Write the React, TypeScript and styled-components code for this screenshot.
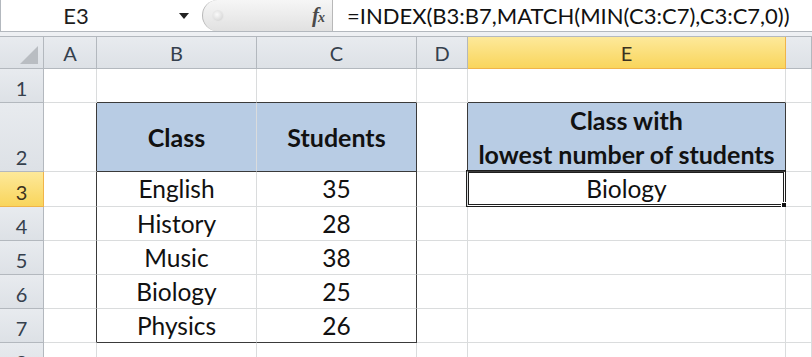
import React from "react";
import styled, { createGlobalStyle } from "styled-components";

const GlobalStyle = createGlobalStyle`
  html, body {
    margin: 0;
    padding: 0;
    background: #fff;
    overflow: hidden;
  }
  body {
    font-family: Lato, "Liberation Sans", sans-serif;
  }
`;

const GRID = "#dadcdd";
const DARK = "#3a3a3a";
const HEAD_LINE = "#b3b8be";

const Window = styled.div`
  width: 812px;
  height: 357px;
  display: flex;
  flex-direction: column;
  overflow: hidden;
  background: #fff;

  & > * {
    flex-shrink: 0;
  }
`;

const FormulaBar = styled.div`
  height: 31px;
  display: flex;
  align-items: stretch;
  border-left: 1px solid ${HEAD_LINE};
  border-bottom: 1px solid ${HEAD_LINE};
  background: #fff;
`;

const NameBox = styled.div`
  width: 201px;
  display: flex;
  align-items: center;
`;

const NameText = styled.span`
  width: 150px;
  text-align: center;
  font-size: 22px;
  color: #1e1e1e;
`;

const DropArrow = styled.span`
  margin-left: 28px;
  width: 0;
  height: 0;
  border-left: 5px solid transparent;
  border-right: 5px solid transparent;
  border-top: 6px solid #222;
`;

const Pill = styled.div`
  width: 131px;
  box-sizing: border-box;
  display: flex;
  align-items: center;
  justify-content: space-between;
  padding: 0 8px 0 10px;
  border: 1px solid #b8b8b8;
  border-top: none;
  border-bottom: none;
  border-radius: 16px 0 0 16px;
  background: linear-gradient(#f6f6f6, #e1e1e1);
`;

const Knob = styled.span`
  width: 10px;
  height: 10px;
  border-radius: 50%;
  background: radial-gradient(circle at 40% 35%, #fafafa, #cdcdcd);
  box-shadow: 0 0 0 1px #e6e6e6;
`;

const Fx = styled.span`
  font-family: "Liberation Serif", serif;
  font-style: italic;
  font-weight: 700;
  font-size: 21px;
  color: #4a4a4a;
  letter-spacing: -1px;

  small {
    font-size: 14px;
  }
`;

const FormulaText = styled.div`
  flex: 1;
  display: flex;
  align-items: center;
  padding-left: 14px;
  font-size: 22px;
  color: #111;
  white-space: nowrap;
`;

const Band = styled.div`
  height: 4px;
  background: #eef0f3;
  border-bottom: 1px solid ${HEAD_LINE};
`;

const Sheet = styled.div`
  display: grid;
  grid-template-columns: 44px 53px 160px 160px 51px 318px 1fr;
  grid-template-rows: 32px 34px 69px 35px 34px 34px 34px 34px 34px;
`;

const Head = styled.div<{ $active?: boolean; $row?: boolean }>`
  box-sizing: border-box;
  display: flex;
  justify-content: center;
  align-items: ${(p) => (p.$row ? "flex-end" : "center")};
  padding-bottom: ${(p) => (p.$row ? "3px" : "0")};
  font-size: 20px;
  line-height: 22px;
  color: ${(p) => (p.$active ? "#3c3220" : "#35404d")};
  background: ${(p) =>
    p.$active
      ? "linear-gradient(#fde99a, #f9d55c)"
      : "linear-gradient(#e8ebef, #dde1e6)"};
  border-right: 1px solid ${(p) => (p.$active ? "#f0b449" : HEAD_LINE)};
  border-bottom: 1px solid ${(p) => (p.$active ? "#f0b449" : HEAD_LINE)};
`;

const Corner = styled(Head)`
  align-items: flex-end;
  justify-content: flex-end;
  padding: 0 5px 4px 0;
`;

const Cell = styled.div<{
  $fill?: string;
  $bold?: boolean;
  $darkRight?: boolean;
  $darkBottom?: boolean;
}>`
  position: relative;
  box-sizing: border-box;
  display: flex;
  align-items: center;
  justify-content: center;
  text-align: center;
  white-space: nowrap;
  font-size: ${(p) => (p.$bold ? "25px" : "24.5px")};
  line-height: 34px;
  font-weight: ${(p) => (p.$bold ? 700 : 400)};
  color: #111;
  background: ${(p) => p.$fill ?? "#fff"};
  border-right: 1px solid ${(p) => (p.$darkRight ? DARK : GRID)};
  border-bottom: 1px solid ${(p) => (p.$darkBottom ? DARK : GRID)};
`;

const Selection = styled.div`
  position: absolute;
  top: -2px;
  left: -2px;
  right: -1px;
  bottom: -1px;
  border: 3px double #1e1e1e;
  pointer-events: none;
`;

const FillHandle = styled.span`
  position: absolute;
  right: -5px;
  bottom: -5px;
  width: 5px;
  height: 5px;
  background: #111;
  border: 1px solid #fff;
`;

const HEADER_FILL = "#b8cce4";
const columns = ["A", "B", "C", "D", "E", "F"];

type Spec = { text?: React.ReactNode; bold?: boolean; fill?: string };

const content: Record<string, Spec> = {
  B2: { text: "Class", bold: true, fill: HEADER_FILL },
  C2: { text: "Students", bold: true, fill: HEADER_FILL },
  E2: {
    text: (
      <span>
        Class with
        <br />
        lowest number of students
      </span>
    ),
    bold: true,
    fill: HEADER_FILL,
  },
  B3: { text: "English" },
  C3: { text: "35" },
  B4: { text: "History" },
  C4: { text: "28" },
  B5: { text: "Music" },
  C5: { text: "38" },
  B6: { text: "Biology" },
  C6: { text: "25" },
  B7: { text: "Physics" },
  C7: { text: "26" },
  E3: { text: "Biology" },
};

const inTable = (row: number) => row >= 2 && row <= 7;

const darkRight = (col: string, row: number) =>
  ((col === "A" || col === "C") && inTable(row)) ||
  ((col === "D" || col === "E") && row === 2);

const darkBottom = (col: string, row: number) =>
  ((col === "B" || col === "C") && (row === 1 || row === 2 || row === 7)) ||
  (col === "E" && (row === 1 || row === 2));

const activeCol = "E";
const activeRow = 3;

export default function App() {
  const rows = [1, 2, 3, 4, 5, 6, 7, 8];
  return (
    <Window>
      <GlobalStyle />
      <FormulaBar>
        <NameBox>
          <NameText>E3</NameText>
          <DropArrow />
        </NameBox>
        <Pill>
          <Knob />
          <Fx>
            f<small>x</small>
          </Fx>
        </Pill>
        <FormulaText>=INDEX(B3:B7,MATCH(MIN(C3:C7),C3:C7,0))</FormulaText>
      </FormulaBar>
      <Band />
      <Sheet>
        <Corner>
          <svg width="18" height="18" viewBox="0 0 18 18">
            <polygon points="18,0 18,18 0,18" fill="#b9bdc2" />
          </svg>
        </Corner>
        {columns.map((c) => (
          <Head key={c} $active={c === activeCol}>
            {c === "F" ? "" : c}
          </Head>
        ))}
        {rows.map((r) => (
          <React.Fragment key={r}>
            <Head $row $active={r === activeRow}>
              {r}
            </Head>
            {columns.map((c) => {
              const spec = content[`${c}${r}`] ?? {};
              const selected = c === activeCol && r === activeRow;
              return (
                <Cell
                  key={c}
                  $fill={spec.fill}
                  $bold={spec.bold}
                  $darkRight={darkRight(c, r)}
                  $darkBottom={darkBottom(c, r)}
                >
                  {spec.text}
                  {selected && (
                    <Selection>
                      <FillHandle />
                    </Selection>
                  )}
                </Cell>
              );
            })}
          </React.Fragment>
        ))}
      </Sheet>
    </Window>
  );
}
